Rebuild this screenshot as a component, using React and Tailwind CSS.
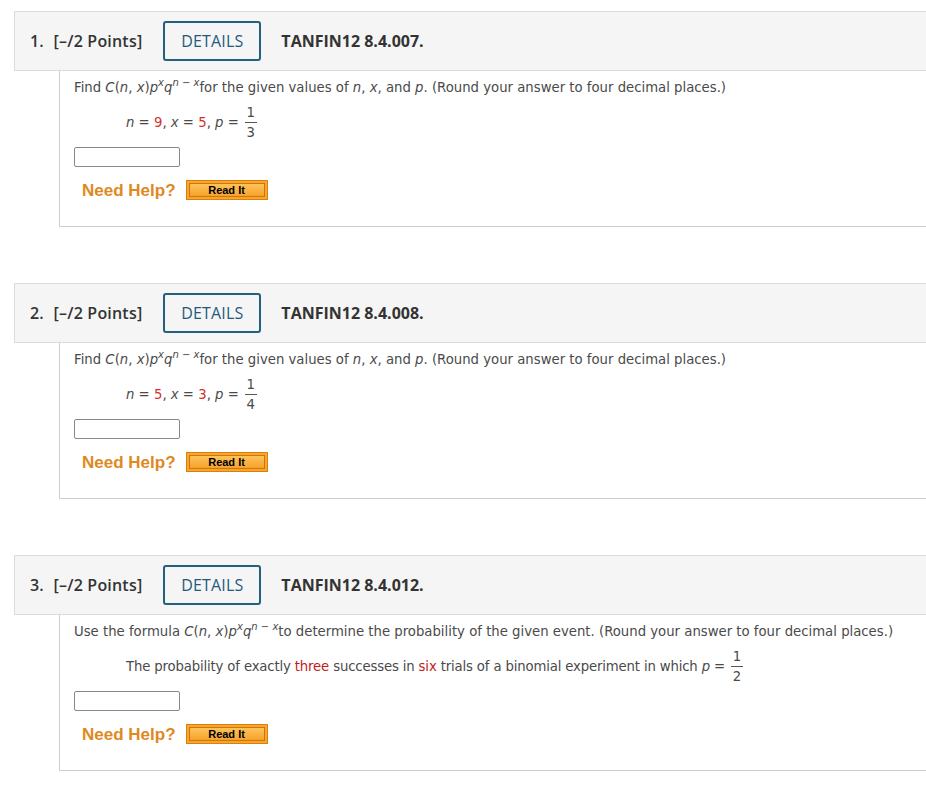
const questions = [
  {
    num: '1.',
    code: 'TANFIN12 8.4.007.',
    kind: 'values',
    n: '9',
    x: '5',
    num1: '1',
    den: '3',
  },
  {
    num: '2.',
    code: 'TANFIN12 8.4.008.',
    kind: 'values',
    n: '5',
    x: '3',
    num1: '1',
    den: '4',
  },
  {
    num: '3.',
    code: 'TANFIN12 8.4.012.',
    kind: 'event',
    num1: '1',
    den: '2',
  },
];

const Formula = () => (
  <span>
    <i>C</i>(<i>n</i>, <i>x</i>)<i>p</i>
    <span className="text-[10px] italic relative -top-[6px]">x</span>
    <i>q</i>
    <span className="text-[10px] relative -top-[6px]">
      <i>n</i> − <i>x</i>
    </span>
  </span>
);

const Fraction = ({ top, bottom }) => (
  <span className="inline-flex flex-col items-center ml-[6px]">
    <span className="leading-[13px]">{top}</span>
    <span className="w-[12px] h-px bg-[#555] my-[3px]" />
    <span className="leading-[13px]">{bottom}</span>
  </span>
);

const Question = ({ q }) => {
  return (
    <div className="mb-[56px]">
      <div className="h-[60px] border border-[#dcdcdc] bg-[#f5f5f5] flex items-center pl-[15px] text-[16px] text-[#333] font-['Open_Sans',sans-serif]">
        <span className="font-semibold">{q.num}</span>
        <span className="font-semibold ml-[10px] tracking-[0.2px]">[–/2 Points]</span>
        <span className="ml-[21px] h-[40px] w-[98px] border-2 border-[#23607c] rounded-[3px] flex items-center justify-center text-[#1f5a7e] tracking-[0.2px]">
          DETAILS
        </span>
        <span className="ml-[20px] font-bold">{q.code}</span>
      </div>
      <div className="ml-[45px] h-[156px] border-l border-b border-[#cfcfcf] pl-[14px] pt-[9px] text-[13.25px] text-[#4a4a4a] font-['DejaVu_Sans',Verdana,sans-serif]">
        {q.kind === 'values' ? (
          <div className="leading-[16px] whitespace-nowrap">
            Find <Formula />for the given values of <i>n</i>, <i>x</i>, and <i>p</i>. (Round your answer to four decimal places.)
          </div>
        ) : (
          <div className="leading-[16px] whitespace-nowrap">
            Use the formula <Formula />to determine the probability of the given event. (Round your answer to four decimal places.)
          </div>
        )}
        <div className="mt-[9px] pl-[52px] flex items-center h-[33px] whitespace-nowrap">
          {q.kind === 'values' ? (
            <span>
              <i>n</i> = <span className="text-[#d32f2f]">{q.n}</span>, <i>x</i> ={' '}
              <span className="text-[#d32f2f]">{q.x}</span>, <i>p</i> =
            </span>
          ) : (
            <span className="tracking-[-0.15px]">
              The probability of exactly <span className="text-[#c41a1a]">three</span> successes in{' '}
              <span className="text-[#c41a1a]">six</span> trials of a binomial experiment in which <i>p</i> =
            </span>
          )}
          <Fraction top={q.num1} bottom={q.den} />
        </div>
        <div className="mt-[8px] w-[106px] h-[20px] border border-[#888] rounded-[2px] bg-white" />
        <div className="mt-[13px] flex items-center pl-[8px] h-[20px]">
          <span className="text-[17px] font-bold text-[#e0891e] font-['Liberation_Sans',Arial,sans-serif] relative top-[1px]">
            Need Help?
          </span>
          <span className="ml-[10px] w-[82px] h-[20px] border border-[#d9800f] bg-[#f8a52c] p-[2px] flex">
            <span className="flex-1 border border-[#c9770e] bg-gradient-to-b from-[#fcc35a] to-[#f7a12a] flex items-center justify-center text-[11px] font-bold text-black font-['Liberation_Sans',Arial,sans-serif]">
              Read It
            </span>
          </span>
        </div>
      </div>
    </div>
  );
};

export default function App() {
  return (
    <div className="w-[926px] h-[793px] overflow-hidden bg-white">
      <div className="pt-[11px] pl-[14px] w-[960px]">
        {questions.map((q) => (
          <Question key={q.num} q={q} />
        ))}
      </div>
    </div>
  );
}
